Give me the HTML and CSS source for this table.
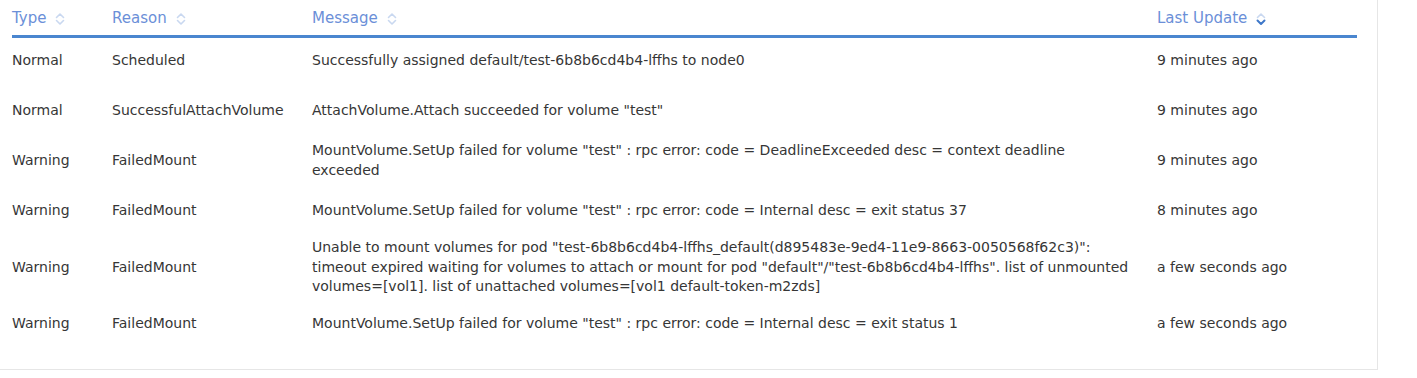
FILE: index.html
```html
<!DOCTYPE html>
<html lang="en">
<head>
<meta charset="utf-8">
<title>Events</title>
<link rel="stylesheet" href="styles.css">
</head>
<body>
<div class="card">
  <table class="events">
    <colgroup>
      <col class="c-type">
      <col class="c-reason">
      <col class="c-msg">
      <col class="c-time">
    </colgroup>
    <thead>
      <tr>
        <th><span class="th-label">Type</span><span class="sort"><svg viewBox="0 0 10 14" width="10" height="14"><path class="up" d="M1.5 5.5 L5 2 L8.5 5.5"/><path class="down" d="M1.5 8.5 L5 12 L8.5 8.5"/></svg></span></th>
        <th><span class="th-label">Reason</span><span class="sort"><svg viewBox="0 0 10 14" width="10" height="14"><path class="up" d="M1.5 5.5 L5 2 L8.5 5.5"/><path class="down" d="M1.5 8.5 L5 12 L8.5 8.5"/></svg></span></th>
        <th><span class="th-label">Message</span><span class="sort"><svg viewBox="0 0 10 14" width="10" height="14"><path class="up" d="M1.5 5.5 L5 2 L8.5 5.5"/><path class="down" d="M1.5 8.5 L5 12 L8.5 8.5"/></svg></span></th>
        <th><span class="th-label">Last Update</span><span class="sort"><svg viewBox="0 0 10 14" width="10" height="14"><path class="up" d="M1.5 5.5 L5 2 L8.5 5.5"/><path class="down active" d="M1.5 8.5 L5 12 L8.5 8.5"/></svg></span></th>
      </tr>
    </thead>
    <tbody>
      <tr>
        <td>Normal</td>
        <td>Scheduled</td>
        <td>Successfully assigned default/test-6b8b6cd4b4-lffhs to node0</td>
        <td>9 minutes ago</td>
      </tr>
      <tr>
        <td>Normal</td>
        <td>SuccessfulAttachVolume</td>
        <td>AttachVolume.Attach succeeded for volume "test"</td>
        <td>9 minutes ago</td>
      </tr>
      <tr>
        <td>Warning</td>
        <td>FailedMount</td>
        <td>MountVolume.SetUp failed for volume "test" : rpc error: code = DeadlineExceeded desc = context deadline<br>exceeded</td>
        <td>9 minutes ago</td>
      </tr>
      <tr>
        <td>Warning</td>
        <td>FailedMount</td>
        <td>MountVolume.SetUp failed for volume "test" : rpc error: code = Internal desc = exit status 37</td>
        <td>8 minutes ago</td>
      </tr>
      <tr>
        <td>Warning</td>
        <td>FailedMount</td>
        <td>Unable to mount volumes for pod "test-6b8b6cd4b4-lffhs_default(d895483e-9ed4-11e9-8663-0050568f62c3)":<br>timeout expired waiting for volumes to attach or mount for pod "default"/"test-6b8b6cd4b4-lffhs". list of unmounted<br>volumes=[vol1]. list of unattached volumes=[vol1 default-token-m2zds]</td>
        <td>a few seconds ago</td>
      </tr>
      <tr>
        <td>Warning</td>
        <td>FailedMount</td>
        <td>MountVolume.SetUp failed for volume "test" : rpc error: code = Internal desc = exit status 1</td>
        <td>a few seconds ago</td>
      </tr>
    </tbody>
  </table>
</div>
</body>
</html>
```

FILE: styles.css
```css
html, body {
  margin: 0;
  padding: 0;
  background: #ffffff;
}

body {
  font-family: "DejaVu Sans", "Liberation Sans", sans-serif;
  font-size: 14px;
  color: #363636;
}

.card {
  width: 1345px;
  padding: 0 20px 17px 12px;
  border-right: 1px solid #e6e6e6;
  border-bottom: 1px solid #e6e6e6;
  background: #ffffff;
}

.events {
  width: 1345px;
  border-collapse: separate;
  border-spacing: 0;
  table-layout: fixed;
}

.c-type { width: 100px; }
.c-reason { width: 200px; }
.c-msg { width: 845px; }
.c-time { width: 200px; }

.events th {
  text-align: left;
  font-weight: 400;
  font-size: 15px;
  color: #6b8fd8;
  height: 38px;
  box-sizing: border-box;
  padding: 2px 0 0 0;
  line-height: 21px;
  vertical-align: middle;
  border-bottom: 3px solid #4a86cf;
  white-space: nowrap;
}

.th-label {
  vertical-align: middle;
}

.sort {
  display: inline-block;
  vertical-align: middle;
  margin-left: 9px;
  width: 10px;
  height: 14px;
  line-height: 0;
}

.sort path {
  fill: none;
  stroke: #c9d8f0;
  stroke-width: 1.6;
  stroke-linecap: round;
  stroke-linejoin: round;
}

.sort path.active {
  stroke: #3f78c9;
  stroke-width: 2;
}

.events td {
  height: 50px;
  box-sizing: border-box;
  padding: 0 4px 5px 0;
  line-height: 19.5px;
  vertical-align: middle;
  text-align: left;
}
```
